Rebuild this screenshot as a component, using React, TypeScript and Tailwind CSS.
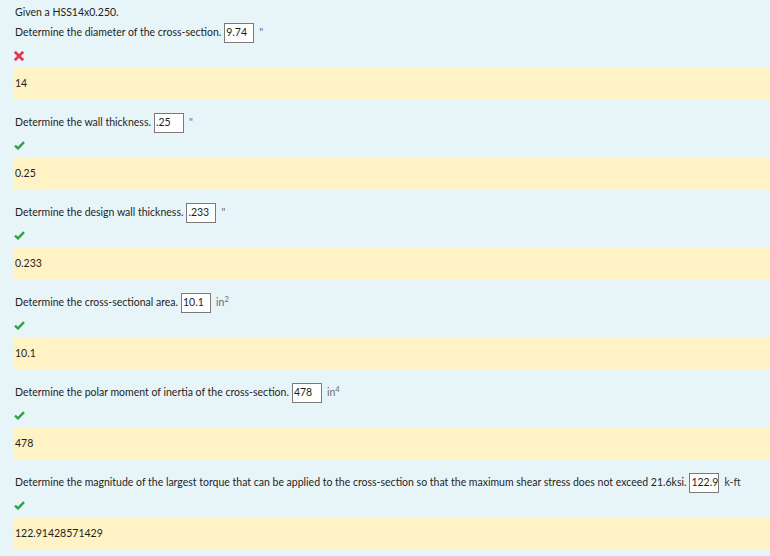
import { type ReactNode } from 'react'

type Item = {
  question: string
  value: string
  unit: ReactNode
  correct: boolean
  answer: string
}

const items: Item[] = [
  { question: 'Determine the diameter of the cross-section.', value: '9.74', unit: '"', correct: false, answer: '14' },
  { question: 'Determine the wall thickness.', value: '.25', unit: '"', correct: true, answer: '0.25' },
  { question: 'Determine the design wall thickness.', value: '.233', unit: '"', correct: true, answer: '0.233' },
  {
    question: 'Determine the cross-sectional area.',
    value: '10.1',
    unit: (
      <>
        in<sup className="text-[7.5px]">2</sup>
      </>
    ),
    correct: true,
    answer: '10.1',
  },
  {
    question: 'Determine the polar moment of inertia of the cross-section.',
    value: '478',
    unit: (
      <>
        in<sup className="text-[7.5px]">4</sup>
      </>
    ),
    correct: true,
    answer: '478',
  },
  {
    question:
      'Determine the magnitude of the largest torque that can be applied to the cross-section so that the maximum shear stress does not exceed 21.6ksi.',
    value: '122.9',
    unit: <span className="text-[#333]">k-ft</span>,
    correct: true,
    answer: '122.91428571429',
  },
]

function CrossIcon() {
  return (
    <svg width="10" height="10" viewBox="0 0 10 10">
      <path d="M1.8 1.8 L8.2 8.2 M8.2 1.8 L1.8 8.2" stroke="#e23b4e" strokeWidth="2.8" strokeLinecap="square" />
    </svg>
  )
}

function CheckIcon() {
  return (
    <svg width="11" height="9" viewBox="0 0 11 9">
      <path d="M1 4.6 L4 7.4 L10 1.2" fill="none" stroke="#31a14a" strokeWidth="2.4" />
    </svg>
  )
}

function Block({ item, first }: { item: Item; first: boolean }) {
  return (
    <div className={first ? 'mt-[1px]' : 'mt-[13px]'}>
      <div className="flex h-5 items-center whitespace-nowrap pl-[2px]">
        <span>{item.question}</span>
        <span className="ml-[3px] flex h-5 w-[30px] items-center overflow-hidden border border-[#7a7a7a] bg-white pl-[1px]">
          {item.value}
        </span>
        <span className="ml-[5px] text-[#6b6b6b]">{item.unit}</span>
      </div>
      <div className="flex h-6 items-start pl-[1px] pt-[8px]">{item.correct ? <CheckIcon /> : <CrossIcon />}</div>
      <div className="flex h-[33px] items-center bg-[#fff2c4] pl-[2px]">{item.answer}</div>
    </div>
  )
}

export default function App() {
  return (
    <div
      className="min-h-[556px] bg-[#e8f5f8] pl-[13px] pt-1 text-[10.5px] text-[#1e1e1e]"
      style={{ fontFamily: 'Lato, "Open Sans", sans-serif' }}
    >
      <div className="flex h-[18px] items-center pl-[2px]">Given a HSS14x0.250.</div>
      {items.map((item, i) => (
        <Block key={item.question} item={item} first={i === 0} />
      ))}
    </div>
  )
}
